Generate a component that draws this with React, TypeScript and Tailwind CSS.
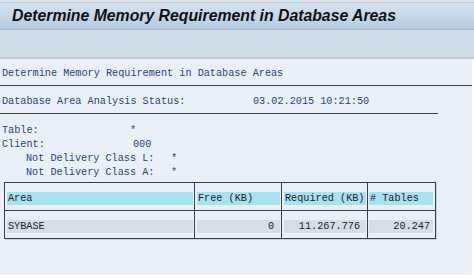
export default function App() {
  const mono = { fontFamily: '"Liberation Mono", "DejaVu Sans Mono", monospace' };

  return (
    <div className="h-[278px] w-[474px] overflow-hidden bg-white">
      {/* Title bar */}
      <div className="border-t-2 border-[#dde3ea]">
        <div
          className="flex h-[28px] items-center border-t border-b border-t-[#c2cedb] border-b-[#a9bccf] bg-gradient-to-b from-[#d6e3f0] to-[#b5cbe0] pl-[12px] text-[15.8px] font-bold italic text-[#111]"
          style={{ fontFamily: '"Liberation Sans", Arial, sans-serif' }}
        >
          Determine Memory Requirement in Database Areas
        </div>
      </div>

      {/* Toolbar band */}
      <div className="h-[29px] border-b-2 border-[#bfcbd7] bg-[#d0dce6]" />

      {/* List output */}
      <div
        className="h-[216px] w-[472px] bg-[#eaf0f8] pt-[8px] text-[10.2px] leading-[14px] text-[#28467a]"
        style={mono}
      >
        <div className="pl-[2px]">Determine Memory Requirement in Database Areas</div>
        <div className="mt-[4px] border-t border-[#3a3f48]" />
        <div className="mt-[9px] flex pl-[2px]">
          <span className="w-[251px]">Database Area Analysis Status:</span>
          <span>03.02.2015 10:21:50</span>
        </div>
        <div className="mt-[4px] w-[438px] border-t border-[#3a3f48]" />

        <div className="mt-[10px] pl-[2px]">
          <div className="flex">
            <span className="w-[128px]">Table:</span>
            <span>*</span>
          </div>
          <div className="flex">
            <span className="w-[131px]">Client:</span>
            <span>000</span>
          </div>
          <div className="flex pl-[24px]">
            <span className="w-[145px]">Not Delivery Class L:</span>
            <span>*</span>
          </div>
          <div className="flex pl-[24px]">
            <span className="w-[145px]">Not Delivery Class A:</span>
            <span>*</span>
          </div>
        </div>

        {/* Table */}
        <div className="ml-[4px] mt-[2px] w-[432px] border border-[#3a3f48] text-[#222] shadow-[1px_1px_0_#c9d0da]">
          <div className="grid grid-cols-[190px_87px_86px_1fr] border-b border-[#3a3f48]">
            <div className="border-r border-[#3a3f48] pb-[5px] pl-[2px] pr-[1px] pt-[9px]">
              <div className="h-[13px] bg-[#a4e3ef] pl-[1px] leading-[14px]">Area</div>
            </div>
            <div className="border-r border-[#3a3f48] pb-[5px] pl-[2px] pr-[1px] pt-[9px]">
              <div className="h-[13px] bg-[#a4e3ef] pl-[1px] leading-[14px]">Free (KB)</div>
            </div>
            <div className="border-r border-[#3a3f48] pb-[5px] pl-[2px] pr-[1px] pt-[9px]">
              <div className="h-[13px] bg-[#a4e3ef] pl-[1px] leading-[14px]">Required (KB)</div>
            </div>
            <div className="pb-[5px] pl-[1px] pr-[2px] pt-[9px]">
              <div className="h-[13px] bg-[#a4e3ef] pl-[1px] leading-[14px]"># Tables</div>
            </div>
          </div>
          <div className="grid grid-cols-[190px_87px_86px_1fr]">
            <div className="border-r border-[#3a3f48] pb-[5px] pl-[2px] pr-[1px] pt-[9px]">
              <div className="h-[13px] bg-[#d5dde9] pl-[1px] leading-[14px]">SYBASE</div>
            </div>
            <div className="border-r border-[#3a3f48] pb-[5px] pl-[2px] pr-[1px] pt-[9px]">
              <div className="h-[13px] bg-[#d5dde9] pr-[6px] text-right leading-[14px]">0</div>
            </div>
            <div className="border-r border-[#3a3f48] pb-[5px] pl-[2px] pr-[1px] pt-[9px]">
              <div className="h-[13px] bg-[#d5dde9] pr-[6px] text-right leading-[14px]">11.267.776</div>
            </div>
            <div className="pb-[5px] pl-[1px] pr-[2px] pt-[9px]">
              <div className="h-[13px] bg-[#d5dde9] pr-[3px] text-right leading-[14px]">20.247</div>
            </div>
          </div>
        </div>
      </div>
    </div>
  );
}
